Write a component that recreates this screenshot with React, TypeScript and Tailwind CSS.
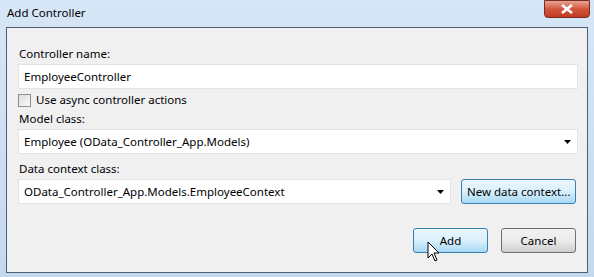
import React from 'react';

const font = { fontFamily: '"Noto Sans", "Open Sans", sans-serif' };

const Arrow: React.FC = () => (
  <svg width="7" height="4" viewBox="0 0 7 4" className="shrink-0">
    <path d="M0 0h7L3.5 4z" fill="#000" />
  </svg>
);

const Label: React.FC<{ text: string }> = ({ text }) => (
  <div className="text-[11.5px] leading-[16px] text-black pl-[1px]">{text}</div>
);

const Select: React.FC<{ value: string; className?: string }> = ({ value, className }) => (
  <div
    className={`h-[25px] bg-white border border-[#e3e3e3] flex items-center justify-between pl-[5px] pr-[6px] text-[11.5px] text-black ${className || ''}`}
  >
    <span>{value}</span>
    <Arrow />
  </div>
);

const Button: React.FC<{ text: string; hot?: boolean; className?: string }> = ({ text, hot, className }) => (
  <div
    className={`h-[25px] rounded-[3px] border flex items-center justify-center text-[11.5px] text-black ${
      hot
        ? 'border-[#3c7fb1] bg-gradient-to-b from-[#eaf6fd] via-[#d9f0fc] to-[#a7d9f5]'
        : 'border-[#707070] bg-gradient-to-b from-[#f2f2f2] via-[#ebebeb] to-[#cfcfcf]'
    } ${className || ''}`}
  >
    {text}
  </div>
);

export default function App() {
  return (
    <div className="w-[594px] h-[277px] bg-gradient-to-b from-[#d6e6f6] to-[#c4d9ee] relative overflow-hidden" style={font}>
      <div className="flex items-start h-[27px]">
        <div className="pl-[7px] pt-[4px] text-[11.5px] text-black">Add Controller</div>
        <div className="ml-auto mr-[4px] w-[46px] h-[18px] rounded-b-[4px] border border-[#7a2a20] bg-gradient-to-b from-[#e8a493] via-[#d1553b] to-[#c23a22] flex items-center justify-center">
          <svg width="12" height="10" viewBox="0 0 12 10">
            <path d="M1 1l10 8M11 1L1 9" stroke="#fff" strokeWidth="2.6" />
          </svg>
        </div>
      </div>
      <div className="mx-[6px] w-[582px] h-[246px] bg-[#f0f0f0] border border-[#4f5e74] pt-[18px] px-[11px]">
        <Label text="Controller name:" />
        <div className="mt-[2px] h-[25px] w-[560px] bg-white border border-[#e3e3e3] flex items-center pl-[5px] text-[11.5px] text-black">
          EmployeeController
        </div>
        <div className="mt-[4px] flex items-center gap-[5px] h-[14px]">
          <div className="w-[13px] h-[13px] border border-[#8e8f8f] bg-gradient-to-br from-[#dcdcdc] to-[#fafafa]" />
          <span className="text-[11.5px] text-black">Use async controller actions</span>
        </div>
        <div className="mt-[4px]"><Label text="Model class:" /></div>
        <Select className="mt-[2px] w-[560px]" value="Employee (OData_Controller_App.Models)" />
        <div className="mt-[7px]"><Label text="Data context class:" /></div>
        <div className="mt-[2px] flex items-center">
          <Select className="w-[435px]" value="OData_Controller_App.Models.EmployeeContext" />
          <Button text="New data context..." hot className="ml-[10px] w-[115px]" />
        </div>
        <div className="mt-[24px] flex justify-end gap-[13px]">
          <Button text="Add" hot className="w-[75px]" />
          <Button text="Cancel" className="w-[75px]" />
        </div>
      </div>
      <svg className="absolute left-[427px] top-[241px]" width="13" height="21" viewBox="0 0 13 21">
        <path d="M1 1v16l4-4 3 7 2-1-3-7h5z" fill="#fff" stroke="#000" strokeWidth="1" strokeLinejoin="round" />
      </svg>
    </div>
  );
}
